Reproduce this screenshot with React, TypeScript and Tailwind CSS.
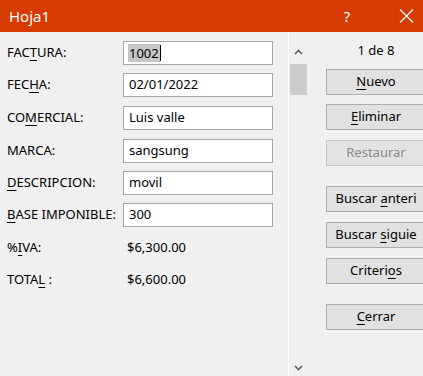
import React from "react";

const U = ({ children }: { children: React.ReactNode }) => (
  <span className="underline underline-offset-[3px] decoration-1">{children}</span>
);

function Row({ label, value, mt, selected }: { label: React.ReactNode; value: string; mt: string; selected?: boolean }) {
  return (
    <div className={`flex items-center h-[24px] ${mt}`}>
      <div className="w-[123px] pl-[7px] shrink-0 whitespace-nowrap">{label}</div>
      <div className="w-[150px] h-[24px] border border-[#a6a6a6] bg-white flex items-center pl-[4px]">
        {selected ? (
          <span className="flex items-center">
            <span className="bg-[#c6c6c6] px-[1px] leading-[18px]">{value}</span>
            <span className="w-px h-[16px] bg-black" />
          </span>
        ) : (
          <span className="pl-[1px]">{value}</span>
        )}
      </div>
    </div>
  );
}

function Btn({ children, mt, disabled }: { children: React.ReactNode; mt: string; disabled?: boolean }) {
  return (
    <div
      className={`${mt} w-[100px] h-[26px] shrink-0 flex items-center justify-center border whitespace-nowrap overflow-hidden ${
        disabled ? "border-[#c4c4c4] bg-[#e3e3e3] text-[#8a8a8a]" : "border-[#adadad] bg-[#e1e1e1] text-black"
      }`}
    >
      <span>{children}</span>
    </div>
  );
}

export default function App() {
  return (
    <div
      className="w-[423px] h-[376px] overflow-hidden bg-[#f0f0f0] text-[13px] text-black flex flex-col"
      style={{ fontFamily: '"Noto Sans", "Open Sans", sans-serif' }}
    >
      <div className="h-[32px] bg-[#d83b01] flex items-center shrink-0 text-white">
        <div className="pl-[9px] text-[15px] flex-1">Hoja1</div>
        <div className="w-[20px] text-[15px] mr-[42px] text-center">?</div>
        <svg width="15" height="14" viewBox="0 0 15 14" className="mr-[9px]">
          <path d="M1 0.5 L14 13.5 M14 0.5 L1 13.5" stroke="white" strokeWidth="1.2" fill="none" />
        </svg>
      </div>
      <div className="flex flex-1 min-h-0">
        <div className="w-[288px] shrink-0 flex flex-col pt-[9px]">
          <Row mt="" label={<span>FAC<U>T</U>URA:</span>} value="1002" selected />
          <Row mt="mt-[8px]" label={<span>FEC<U>H</U>A:</span>} value="02/01/2022" />
          <Row mt="mt-[9px]" label={<span>CO<U>M</U>ERCIAL:</span>} value="Luis valle" />
          <Row mt="mt-[9px]" label={<span>MARCA:</span>} value="sangsung" />
          <Row mt="mt-[8px]" label={<span><U>D</U>ESCRIPCION:</span>} value="movil" />
          <Row mt="mt-[8px]" label={<span><U>B</U>ASE IMPONIBLE:</span>} value="300" />
          <div className="flex items-center h-[24px] mt-[9px]">
            <div className="w-[127px] pl-[7px]"><span>%<U>I</U>VA:</span></div>
            <div>$6,300.00</div>
          </div>
          <div className="flex items-center h-[24px] mt-[8px]">
            <div className="w-[127px] pl-[7px]"><span>TOTA<U>L</U> :</span></div>
            <div>$6,600.00</div>
          </div>
        </div>
        <div className="w-[20px] shrink-0 border-l border-white flex flex-col items-center">
          <svg width="9" height="6" viewBox="0 0 9 6" className="mt-[17px]">
            <path d="M1 5 L4.5 1.5 L8 5" stroke="#606060" strokeWidth="1.6" fill="none" />
          </svg>
          <div className="w-[17px] h-[31px] bg-[#cdcdcd] mt-[9px]" />
          <div className="flex-1" />
          <svg width="9" height="6" viewBox="0 0 9 6" className="mb-[5px]">
            <path d="M1 1 L4.5 4.5 L8 1" stroke="#606060" strokeWidth="1.6" fill="none" />
          </svg>
        </div>
        <div className="flex-1 flex flex-col pl-[18px]">
          <div className="w-[100px] text-center mt-[8px] h-[20px] leading-[20px]">1 de 8</div>
          <Btn mt="mt-[9px]"><U>N</U>uevo</Btn>
          <Btn mt="mt-[9px]"><U>E</U>liminar</Btn>
          <Btn mt="mt-[10px]" disabled>Restaurar</Btn>
          <Btn mt="mt-[20px]">Buscar <U>a</U>nteri</Btn>
          <Btn mt="mt-[10px]">Buscar <U>s</U>iguie</Btn>
          <Btn mt="mt-[10px]">Criteri<U>o</U>s</Btn>
          <Btn mt="mt-[20px]"><U>C</U>errar</Btn>
        </div>
      </div>
    </div>
  );
}
